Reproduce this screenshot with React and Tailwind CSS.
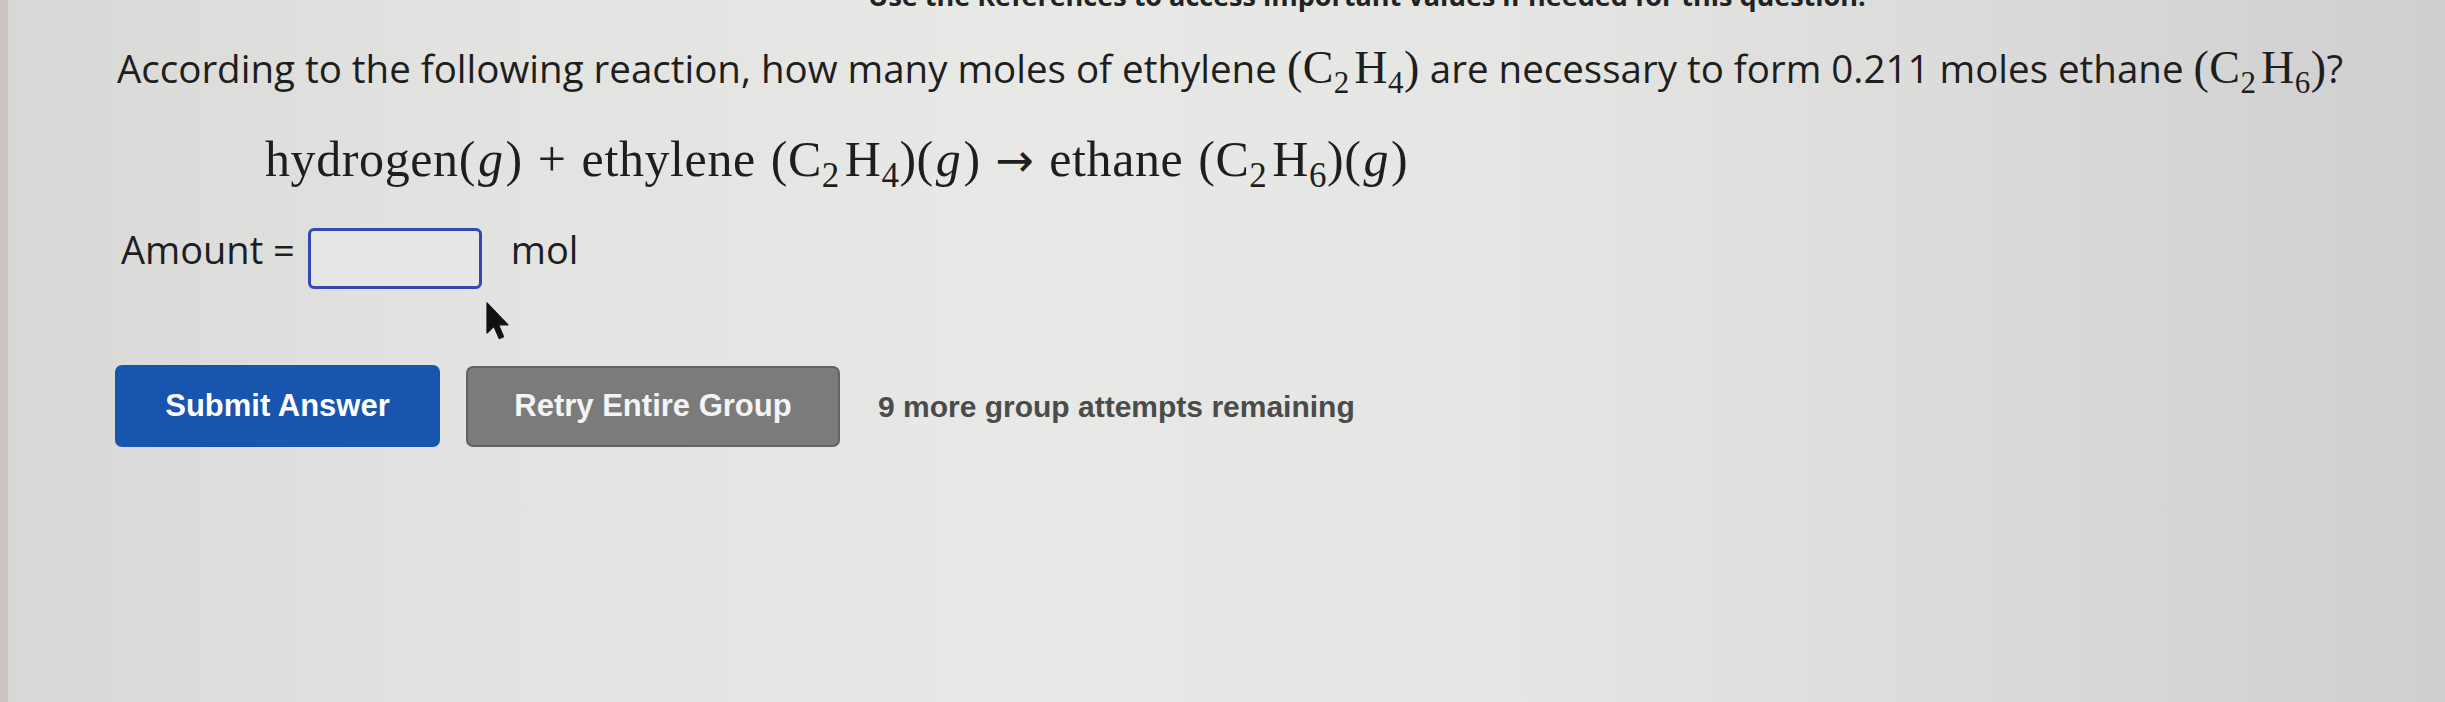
import React from "react";

const serif = { fontFamily: '"Liberation Serif", "DejaVu Serif", serif' };

function Chem({ sa, sb, size, sub }) {
  return (
    <span className={`${size} leading-none tracking-[0.01em]`} style={serif}>
      (C<span className={`${sub} align-[-0.32em]`}>{sa}</span>
      <span className="ml-[0.1em]">H</span>
      <span className={`${sub} align-[-0.32em]`}>{sb}</span>)
    </span>
  );
}

function G() {
  return (
    <span>
      (<i className="mx-[0.04em]">g</i>)
    </span>
  );
}

function Cursor() {
  return (
    <svg
      className="absolute left-[478px] top-[302px]"
      width="24"
      height="38"
      viewBox="0 0 12 19"
    >
      <path
        d="M0.5 0.5 L0.5 15.5 L4 12.2 L6.6 18.3 L8.8 17.4 L6.3 11.4 L11 11.4 Z"
        fill="#111"
        stroke="#111"
        strokeWidth="0.6"
        strokeLinejoin="round"
      />
    </svg>
  );
}

export default function App() {
  return (
    <div
      className="relative w-[2445px] h-[702px] overflow-hidden border-l-[8px] border-[#cbc6c3] bg-[linear-gradient(90deg,#d8d8d6_0%,#e2e2e0_18%,#e8e8e6_42%,#e5e5e3_62%,#dadada_82%,#cfcfcf_100%)] text-[#1e1e1e] flex flex-col"
      style={{ fontFamily: '"Open Sans", "Noto Sans", sans-serif' }}
    >
      <div className="mt-[-18px] pl-[860px] text-[27px] leading-[27px] font-bold text-[#222] whitespace-nowrap">
        Use the References to access important values if needed for this question.
      </div>

      <div className="mt-[35px] pl-[109px] text-[38.5px] leading-[48px] whitespace-nowrap">
        According to the following reaction, how many moles of ethylene{" "}
        <Chem sa="2" sb="4" size="text-[46px]" sub="text-[31px]" /> are necessary to form 0.211 moles ethane{" "}
        <Chem sa="2" sb="6" size="text-[46px]" sub="text-[31px]" />?
      </div>

      <div
        className="mt-[32px] pl-[257px] text-[50px] leading-[58px] whitespace-nowrap tracking-[0.012em] flex items-baseline"
        style={serif}
      >
        <span>
          hydrogen<G />
        </span>
        <span className="mx-[0.3em]">+</span>
        <span>ethylene</span>
        <span className="ml-[0.3em]">
          <Chem sa="2" sb="4" size="text-[50px]" sub="text-[35px]" />
          <G />
        </span>
        <span
          className="mx-[0.32em] text-[46px]"
          style={{ fontFamily: '"DejaVu Sans", sans-serif' }}
        >
          →
        </span>
        <span>ethane</span>
        <span className="ml-[0.3em]">
          <Chem sa="2" sb="6" size="text-[50px]" sub="text-[35px]" />
          <G />
        </span>
      </div>

      <div className="mt-[32px] pl-[113px] flex items-center">
        <span className="text-[38px] leading-[48px] pb-[18px]">Amount =</span>
        <div className="ml-[13px] w-[174px] h-[61px] rounded-[6px] border-[3px] border-[#3746b4] bg-[#e6e6e4]" />
        <span className="ml-[29px] text-[38px] leading-[48px] pb-[18px]">mol</span>
      </div>

      <div
        className="mt-[74px] pl-[107px] flex items-center gap-[26px]"
        style={{ fontFamily: '"Liberation Sans", Arial, sans-serif' }}
      >
        <button className="w-[325px] h-[82px] rounded-[7px] bg-[#1755ae] text-white text-[31px] font-bold">
          Submit Answer
        </button>
        <button className="w-[374px] h-[81px] rounded-[7px] border-2 border-[#626262] bg-[#7b7b7b] text-[#f4f4f4] text-[31px] font-bold">
          Retry Entire Group
        </button>
        <span className="ml-[12px] text-[30px] font-bold text-[#4b4b4b]">
          9 more group attempts remaining
        </span>
      </div>

      <Cursor />
    </div>
  );
}
